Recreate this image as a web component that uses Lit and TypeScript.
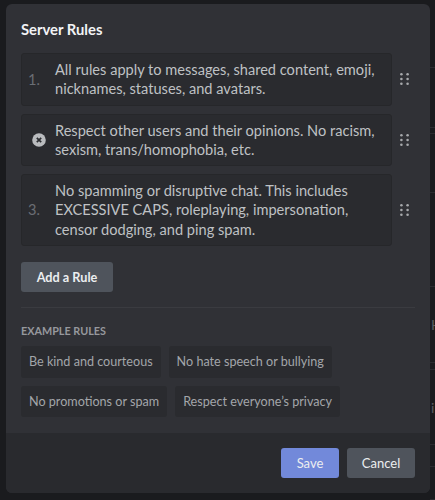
import { LitElement, html, css, svg } from "lit";
import { customElement } from "lit/decorators.js";

const grip = html`<svg class="grip" width="9" height="12" viewBox="0 0 9 12" fill="#a7a9ac">
  ${[1.3, 6, 10.7].map(
    (y) => svg`<circle cx="1.4" cy="${y}" r="1.3"></circle><circle cx="7.6" cy="${y}" r="1.3"></circle>`
  )}
</svg>`;

const remove = html`<svg class="x" width="14" height="14" viewBox="0 0 14 14">
  <circle cx="7" cy="7" r="6.8" fill="#b9bbbe"></circle>
  <path d="M4.8 4.8l4.4 4.4M9.2 4.8l-4.4 4.4" stroke="#2b2d31" stroke-width="1.7" fill="none"></path>
</svg>`;

const stripRows: { h: number; text?: string }[] = [
  { h: 68 },
  { h: 60 },
  { h: 6 },
  { h: 59 },
  { h: 94 },
  { h: 76, text: "H" },
  { h: 7 },
  { h: 75, text: "i" },
  { h: 22 },
  { h: 33 },
];

@customElement("app-root")
export class AppRoot extends LitElement {
  static styles = css`
    :host {
      display: block;
      width: 435px;
      height: 500px;
      background: #1a1b1e;
      font-family: Lato, "Open Sans", sans-serif;
      overflow: hidden;
    }
    .stage {
      height: 100%;
      box-sizing: border-box;
      padding: 4px 0 7px 6px;
      display: flex;
    }
    .modal {
      width: 424px;
      flex: none;
      display: flex;
      flex-direction: column;
      background: #303136;
      border-radius: 6px;
      overflow: hidden;
    }
    .strip {
      flex: 1;
      margin: -4px 0 -7px;
      display: flex;
      flex-direction: column;
      overflow: hidden;
    }
    .strip div {
      flex: none;
      box-sizing: border-box;
      padding-left: 1px;
      display: flex;
      align-items: center;
      border-bottom: 1px solid #2a2b2f;
      color: #5c5e62;
      font-size: 14px;
      overflow: hidden;
    }
    .body {
      flex: 1;
      padding: 15px 15px 0 15px;
    }
    h1 {
      margin: 0 0 14px;
      font-size: 14.8px;
      line-height: 20px;
      font-weight: 700;
      color: #f2f3f5;
    }
    .rules {
      display: flex;
      flex-direction: column;
      gap: 8px;
    }
    .row {
      display: flex;
      align-items: center;
    }
    .rule {
      width: 371px;
      box-sizing: border-box;
      display: flex;
      align-items: center;
      padding: 6px 5px 6px 0;
      background: #2a2b2f;
      border: 1px solid #26272a;
      border-radius: 3px;
      color: #bfc1c4;
      font-size: 14.6px;
      line-height: 19.3px;
    }
    .mark {
      flex: 0 0 27px;
      padding-left: 6px;
      display: flex;
      color: #6a6e74;
    }
    .x {
      margin-left: 4px;
    }
    .handle {
      flex: 1;
      display: flex;
      justify-content: center;
      padding-left: 1px;
    }
    .grip {
      display: block;
    }
    button {
      font: inherit;
      border: 0;
      border-radius: 3px;
      color: #eceef0;
      font-size: 12.7px;
      font-weight: 700;
      background: #4f545c;
      padding: 0;
    }
    .add {
      margin-top: 16px;
      width: 92px;
      height: 30px;
      display: block;
    }
    .divider {
      height: 1px;
      margin: 15px 0 16px;
      background: #3a3b40;
      width: 394px;
    }
    h2 {
      margin: 0 0 8px;
      font-size: 10.8px;
      line-height: 14px;
      font-weight: 700;
      color: #96989d;
      text-transform: uppercase;
    }
    .examples {
      display: flex;
      flex-wrap: wrap;
      gap: 8px;
    }
    .chip {
      padding: 0 8px;
      height: 31.5px;
      display: flex;
      align-items: center;
      background: #2a2b2f;
      border-radius: 3px;
      color: #a3a6aa;
      font-size: 12.6px;
    }
    .footer {
      height: 60px;
      box-sizing: border-box;
      padding: 0 15px 0 0;
      display: flex;
      justify-content: flex-end;
      align-items: center;
      gap: 8px;
      background: #292a2e;
    }
    .footer button {
      height: 30px;
      font-weight: 400;
      font-size: 13px;
      width: 58px;
    }
    .footer .save {
      background: #7289da;
    }
    .footer .cancel {
      width: 68px;
    }
  `;

  render() {
    return html`<div class="stage">
      <div class="modal">
        <div class="body">
          <h1>Server Rules</h1>
          <div class="rules">
            <div class="row">
              <div class="rule">
                <span class="mark">1.</span>
                <span>All rules apply to messages, shared content, emoji, nicknames, statuses, and avatars.</span>
              </div>
              <div class="handle">${grip}</div>
            </div>
            <div class="row">
              <div class="rule">
                <span class="mark">${remove}</span>
                <span>Respect other users and their opinions. No racism, sexism, trans/homophobia, etc.</span>
              </div>
              <div class="handle">${grip}</div>
            </div>
            <div class="row">
              <div class="rule">
                <span class="mark">3.</span>
                <span>No spamming or disruptive chat. This includes EXCESSIVE CAPS, roleplaying, impersonation, censor dodging, and ping spam.</span>
              </div>
              <div class="handle">${grip}</div>
            </div>
          </div>
          <button class="add">Add a Rule</button>
          <div class="divider"></div>
          <h2>Example Rules</h2>
          <div class="examples">
            <div class="chip">Be kind and courteous</div>
            <div class="chip">No hate speech or bullying</div>
            <div class="chip">No promotions or spam</div>
            <div class="chip">Respect everyone’s privacy</div>
          </div>
        </div>
        <div class="footer">
          <button class="save">Save</button>
          <button class="cancel">Cancel</button>
        </div>
      </div>
      <div class="strip">
        ${stripRows.map((r) => html`<div style="height:${r.h}px">${r.text ?? ""}</div>`)}
      </div>
    </div>`;
  }
}
